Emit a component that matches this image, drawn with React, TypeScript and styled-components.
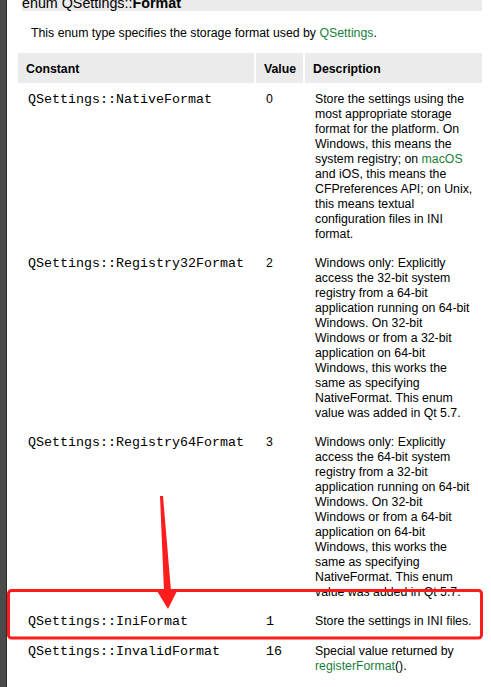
import React from "react";
import styled, { createGlobalStyle } from "styled-components";

const Global = createGlobalStyle`
  html, body { margin: 0; padding: 0; background: #fff; }
  body { font-family: "Liberation Sans", Arial, sans-serif; color: #000; }
`;

const Page = styled.div`
  position: relative;
  display: flex;
  width: 491px;
  height: 687px;
  overflow: hidden;
  background: #fff;
`;

const LeftStrip = styled.div`
  flex: 0 0 6px;
  background: #4a4a4a;
  border-right: 1px solid #2c2c2c;
`;

const Content = styled.div`
  flex: 1;
  padding: 0 9px 0 11px;
  min-width: 0;
`;

const Heading = styled.h3`
  margin: -5.5px 0 0 4px;
  background: #ebebeb;
  font-size: 14.3px;
  font-weight: normal;
  line-height: 16px;
  white-space: nowrap;
`;

const Bold = styled.span`
  font-weight: bold;
`;

const Intro = styled.p`
  margin: 15px 0 0 13px;
  font-size: 12.3px;
  line-height: 15px;
`;

const Link = styled.a`
  color: #1a7f3c;
  text-decoration: none;
`;

const Table = styled.div`
  margin-top: 12.5px;
`;

const Grid = styled.div`
  display: grid;
  grid-template-columns: 236px 47px 177px;
  column-gap: 2px;
`;

const HeaderRow = styled(Grid)``;

const HeadCell = styled.div`
  background: #ebebeb;
  font-weight: bold;
  font-size: 12.3px;
  line-height: 15px;
  padding: 8.5px 8px 6.5px;
`;

const Body = styled.div`
  padding-top: 2px;
`;

const Row = styled(Grid)`
  padding: 7px 0;
`;

const ConstCell = styled.div`
  padding: 0 10px;
  font-family: "Liberation Mono", "Courier New", monospace;
  font-size: 13.33px;
  line-height: 15px;
  white-space: nowrap;
`;

const ValueCell = styled.div<{ $mono?: boolean }>`
  padding: 0 10px;
  font-family: ${(p) =>
    p.$mono
      ? `"Liberation Mono", "Courier New", monospace`
      : `"Liberation Sans", Arial, sans-serif`};
  font-size: ${(p) => (p.$mono ? "13.33px" : "12.3px")};
  line-height: ${(p) => (p.$mono ? "16px" : "15px")};
`;

const DescCell = styled.div`
  padding: 0 8px 0 10px;
  font-size: 12.3px;
  line-height: 15px;
`;

const Overlay = styled.svg`
  position: absolute;
  left: 0;
  top: 0;
  width: 491px;
  height: 687px;
  pointer-events: none;
`;

type Entry = {
  name: string;
  value: string;
  mono?: boolean;
  desc: React.ReactNode;
};

const entries: Entry[] = [
  {
    name: "QSettings::NativeFormat",
    value: "0",
    desc: (
      <>
        Store the settings using the most appropriate storage format for the
        platform. On Windows, this means the system registry; on{" "}
        <Link>macOS</Link> and iOS, this means the CFPreferences API; on Unix,
        this means textual configuration files in INI format.
      </>
    ),
  },
  {
    name: "QSettings::Registry32Format",
    value: "2",
    desc: (
      <>
        Windows only: Explicitly access the 32-bit system registry from a
        64-bit application running on 64-bit Windows. On 32-bit Windows or from
        a 32-bit application on 64-bit Windows, this works the same as
        specifying NativeFormat. This enum value was added in Qt 5.7.
      </>
    ),
  },
  {
    name: "QSettings::Registry64Format",
    value: "3",
    desc: (
      <>
        Windows only: Explicitly access the 64-bit system registry from a
        32-bit application running on 64-bit Windows. On 32-bit Windows or from
        a 64-bit application on 64-bit Windows, this works the same as
        specifying NativeFormat. This enum value was added in Qt 5.7.
      </>
    ),
  },
  {
    name: "QSettings::IniFormat",
    value: "1",
    mono: true,
    desc: <>Store the settings in INI files.</>,
  },
  {
    name: "QSettings::InvalidFormat",
    value: "16",
    mono: true,
    desc: (
      <>
        Special value returned by <Link>registerFormat</Link>().
      </>
    ),
  },
];

export default function App() {
  return (
    <>
      <Global />
      <Page>
        <LeftStrip />
        <Content>
          <Heading>
            enum QSettings::<Bold>Format</Bold>
          </Heading>
          <Intro>
            This enum type specifies the storage format used by{" "}
            <Link>QSettings</Link>.
          </Intro>
          <Table>
            <HeaderRow>
              <HeadCell>Constant</HeadCell>
              <HeadCell>Value</HeadCell>
              <HeadCell>Description</HeadCell>
            </HeaderRow>
            <Body>
              {entries.map((e) => (
                <Row key={e.name}>
                  <ConstCell>{e.name}</ConstCell>
                  <ValueCell $mono={e.mono}>{e.value}</ValueCell>
                  <DescCell>{e.desc}</DescCell>
                </Row>
              ))}
            </Body>
          </Table>
        </Content>
        <Overlay viewBox="0 0 491 687">
          <rect
            x="8.5"
            y="590.5"
            width="473"
            height="47.5"
            rx="3"
            ry="3"
            fill="none"
            stroke="#ff1c1c"
            strokeWidth="3"
          />
          <polygon
            points="160,496 163,496 171,591 177,591 168,609 157,591 164,591"
            fill="#ff1c1c"
          />
        </Overlay>
      </Page>
    </>
  );
}
